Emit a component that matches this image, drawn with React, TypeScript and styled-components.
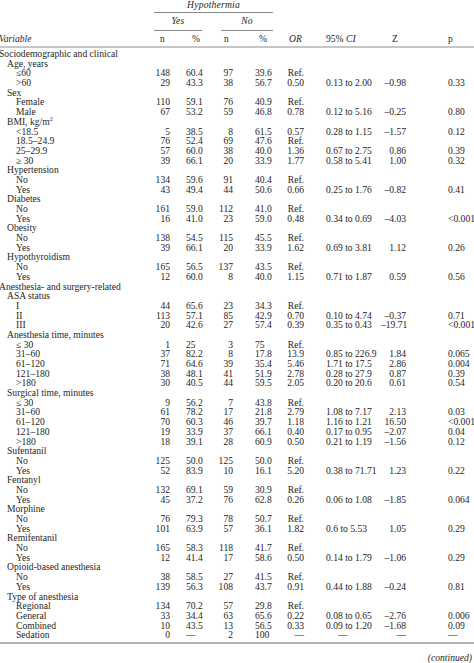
import React from 'react';
import styled, { createGlobalStyle } from 'styled-components';

const GlobalStyle = createGlobalStyle`
  html, body {
    margin: 0;
    padding: 0;
    background: #fff;
  }
  body {
    width: 474px;
    height: 663px;
    overflow: hidden;
    font-family: "Liberation Serif", "Times New Roman", serif;
    color: #262626;
  }
`;

type Align = 'left' | 'right';

interface ColSpec {
    w: number;
    align: Align;
    pad: number;
}

// variable | n | % | n | % | OR | 95% CI | Z | p
const COLS: ColSpec[] = [
    { w: 150, align: 'left', pad: 0 },
    { w: 22, align: 'right', pad: 1 },
    { w: 33, align: 'left', pad: 15 },
    { w: 33, align: 'right', pad: 4 },
    { w: 42, align: 'left', pad: 18 },
    { w: 28, align: 'right', pad: 3 },
    { w: 74, align: 'left', pad: 19 },
    { w: 30, align: 'right', pad: 5 },
    { w: 78, align: 'left', pad: 37 },
];

const template = COLS.map(c => `${c.w}px`).join(' ');

const Page = styled.div`
    width: 490px;
    margin-left: -1px;
    font-size: 9.6px;
`;

const Head = styled.div`
    display: grid;
    grid-template-columns: ${template};
    border-bottom: 2px solid #c6c6c6;
    padding-bottom: 2px;
    line-height: 10px;
`;

const Group = styled.div<{ $col: string; $row: number; $ml: number; $mr: number; $pt: number; $pb: number }>`
    grid-column: ${p => p.$col};
    grid-row: ${p => p.$row};
    margin: 0 ${p => p.$mr}px 0 ${p => p.$ml}px;
    padding: ${p => p.$pt}px 0 ${p => p.$pb}px;
    border-bottom: 1px solid #8a8a8a;
    text-align: center;
    font-style: italic;
    letter-spacing: 0.2px;
`;

const HeadLabel = styled.div<{ $col: number; $pl: number; $italic?: boolean }>`
    grid-column: ${p => p.$col};
    grid-row: 3;
    padding: 3px 0 0 ${p => p.$pl}px;
    font-style: ${p => (p.$italic ? 'italic' : 'normal')};
    white-space: nowrap;
`;

const Body = styled.div`
    padding-top: 1px;
    border-bottom: 2px solid #b4b4b4;
    padding-bottom: 2px;
`;

const Row = styled.div`
    display: grid;
    grid-template-columns: ${template};
    height: 9.7px;
    line-height: 9.7px;
`;

const Label = styled.div<{ $level: number }>`
    padding-left: ${p => [0, 8, 17][p.$level]}px;
    white-space: nowrap;
`;

const Cell = styled.div<{ $align: Align; $pad: number }>`
    text-align: ${p => p.$align};
    ${p => (p.$align === 'right' ? `padding-right: ${p.$pad}px;` : `padding-left: ${p.$pad}px;`)}
    white-space: nowrap;
`;

const Dash = styled.span<{ $shift: number }>`
    display: inline-block;
    margin-left: ${p => p.$shift}px;
`;

const Footer = styled.div`
    text-align: right;
    font-style: italic;
    padding-top: 9px;
    margin-right: 17px;
    line-height: 10px;
`;

interface Line {
    label: React.ReactNode;
    level: number;
    v?: string[];
}

const cat = (label: React.ReactNode): Line => ({ label, level: 0 });
const grp = (label: React.ReactNode): Line => ({ label, level: 1 });
const item = (label: string, ...v: string[]): Line => ({ label, level: 2, v });

const ROWS: Line[] = [
    cat('Sociodemographic and clinical'),
    grp('Age, years'),
    item('≤60', '148', '60.4', '97', '39.6', 'Ref.'),
    item('>60', '29', '43.3', '38', '56.7', '0.50', '0.13 to 2.00', '–0.98', '0.33'),
    grp('Sex'),
    item('Female', '110', '59.1', '76', '40.9', 'Ref.'),
    item('Male', '67', '53.2', '59', '46.8', '0.78', '0.12 to 5.16', '–0.25', '0.80'),
    grp(<>BMI, kg/m<sup style={{ fontSize: '6px', lineHeight: 0 }}>2</sup></>),
    item('<18.5', '5', '38.5', '8', '61.5', '0.57', '0.28 to 1.15', '–1.57', '0.12'),
    item('18.5–24.9', '76', '52.4', '69', '47.6', 'Ref.'),
    item('25–29.9', '57', '60.0', '38', '40.0', '1.36', '0.67 to 2.75', '0.86', '0.39'),
    item('≥ 30', '39', '66.1', '20', '33.9', '1.77', '0.58 to 5.41', '1.00', '0.32'),
    grp('Hypertension'),
    item('No', '134', '59.6', '91', '40.4', 'Ref.'),
    item('Yes', '43', '49.4', '44', '50.6', '0.66', '0.25 to 1.76', '–0.82', '0.41'),
    grp('Diabetes'),
    item('No', '161', '59.0', '112', '41.0', 'Ref.'),
    item('Yes', '16', '41.0', '23', '59.0', '0.48', '0.34 to 0.69', '–4.03', '<0.001'),
    grp('Obesity'),
    item('No', '138', '54.5', '115', '45.5', 'Ref.'),
    item('Yes', '39', '66.1', '20', '33.9', '1.62', '0.69 to 3.81', '1.12', '0.26'),
    grp('Hypothyroidism'),
    item('No', '165', '56.5', '137', '43.5', 'Ref.'),
    item('Yes', '12', '60.0', '8', '40.0', '1.15', '0.71 to 1.87', '0.59', '0.56'),
    cat('Anesthesia- and surgery-related'),
    grp('ASA status'),
    item('I', '44', '65.6', '23', '34.3', 'Ref.'),
    item('II', '113', '57.1', '85', '42.9', '0.70', '0.10 to 4.74', '–0.37', '0.71'),
    item('III', '20', '42.6', '27', '57.4', '0.39', '0.35 to 0.43', '–19.71', '<0.001'),
    grp('Anesthesia time, minutes'),
    item('≤ 30', '1', '25', '3', '75', 'Ref.'),
    item('31–60', '37', '82.2', '8', '17.8', '13.9', '0.85 to 226.9', '1.84', '0.065'),
    item('61–120', '71', '64.6', '39', '35.4', '5.46', '1.71 to 17.5', '2.86', '0.004'),
    item('121–180', '38', '48.1', '41', '51.9', '2.78', '0.28 to 27.9', '0.87', '0.39'),
    item('>180', '30', '40.5', '44', '59.5', '2.05', '0.20 to 20.6', '0.61', '0.54'),
    grp('Surgical time, minutes'),
    item('≤ 30', '9', '56.2', '7', '43.8', 'Ref.'),
    item('31–60', '61', '78.2', '17', '21.8', '2.79', '1.08 to 7.17', '2.13', '0.03'),
    item('61–120', '70', '60.3', '46', '39.7', '1.18', '1.16 to 1.21', '16.50', '<0.001'),
    item('121–180', '19', '33.9', '37', '66.1', '0.40', '0.17 to 0.95', '–2.07', '0.04'),
    item('>180', '18', '39.1', '28', '60.9', '0.50', '0.21 to 1.19', '–1.56', '0.12'),
    grp('Sufentanil'),
    item('No', '125', '50.0', '125', '50.0', 'Ref.'),
    item('Yes', '52', '83.9', '10', '16.1', '5.20', '0.38 to 71.71', '1.23', '0.22'),
    grp('Fentanyl'),
    item('No', '132', '69.1', '59', '30.9', 'Ref.'),
    item('Yes', '45', '37.2', '76', '62.8', '0.26', '0.06 to 1.08', '–1.85', '0.064'),
    grp('Morphine'),
    item('No', '76', '79.3', '78', '50.7', 'Ref.'),
    item('Yes', '101', '63.9', '57', '36.1', '1.82', '0.6 to 5.53', '1.05', '0.29'),
    grp('Remifentanil'),
    item('No', '165', '58.3', '118', '41.7', 'Ref.'),
    item('Yes', '12', '41.4', '17', '58.6', '0.50', '0.14 to 1.79', '–1.06', '0.29'),
    grp('Opioid-based anesthesia'),
    item('No', '38', '58.5', '27', '41.5', 'Ref.'),
    item('Yes', '139', '56.3', '108', '43.7', '0.91', '0.44 to 1.88', '–0.24', '0.81'),
    grp('Type of anesthesia'),
    item('Regional', '134', '70.2', '57', '29.8', 'Ref.'),
    item('General', '33', '34.4', '63', '65.6', '0.22', '0.08 to 0.65', '–2.76', '0.006'),
    item('Combined', '10', '43.5', '13', '56.5', '0.33', '0.09 to 1.20', '–1.68', '0.09'),
    item('Sedation', '0', '—', '2', '100', '—', '—', '—', '—'),
];

// dashes in the CI column sit towards the middle of the column
const renderValue = (value: string, col: number) =>
    value === '—' && col === 6 ? <Dash $shift={12}>{value}</Dash> : value;

const App: React.FC = () => {
    return (
        <Page>
            <GlobalStyle />
            <Head>
                <Group $col="2 / 6" $row={1} $ml={5} $mr={6} $pt={0} $pb={2}>Hypothermia</Group>
                <Group $col="2 / 4" $row={2} $ml={5} $mr={2} $pt={3} $pb={4}>Yes</Group>
                <Group $col="4 / 6" $row={2} $ml={17} $mr={6} $pt={3} $pb={4}>No</Group>
                <HeadLabel $col={1} $pl={0} $italic>Variable</HeadLabel>
                <HeadLabel $col={2} $pl={11}>n</HeadLabel>
                <HeadLabel $col={3} $pl={21}>%</HeadLabel>
                <HeadLabel $col={4} $pl={20}>n</HeadLabel>
                <HeadLabel $col={5} $pl={22}>%</HeadLabel>
                <HeadLabel $col={6} $pl={10} $italic>OR</HeadLabel>
                <HeadLabel $col={7} $pl={19}>95% <i>CI</i></HeadLabel>
                <HeadLabel $col={8} $pl={11}>Z</HeadLabel>
                <HeadLabel $col={9} $pl={37}>p</HeadLabel>
            </Head>
            <Body>
                {ROWS.map((row, i) => (
                    <Row key={i}>
                        <Label $level={row.level}>{row.label}</Label>
                        {row.v?.map((value, c) => (
                            <Cell key={c} $align={COLS[c + 1].align} $pad={COLS[c + 1].pad}>
                                {renderValue(value, c + 1)}
                            </Cell>
                        ))}
                    </Row>
                ))}
            </Body>
            <Footer>(continued)</Footer>
        </Page>
    );
};

export default App;
